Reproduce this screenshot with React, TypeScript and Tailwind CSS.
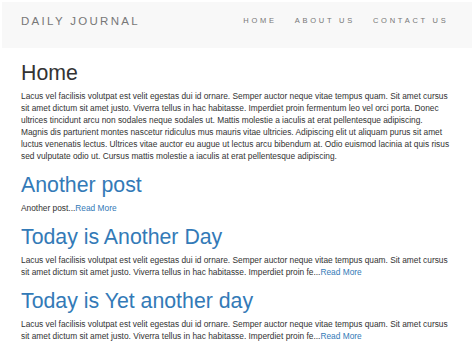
const LOREM_FULL =
  'Lacus vel facilisis volutpat est velit egestas dui id ornare. Semper auctor neque vitae tempus quam. Sit amet cursus sit amet dictum sit amet justo. Viverra tellus in hac habitasse. Imperdiet proin fermentum leo vel orci porta. Donec ultrices tincidunt arcu non sodales neque sodales ut. Mattis molestie a iaculis at erat pellentesque adipiscing. Magnis dis parturient montes nascetur ridiculus mus mauris vitae ultricies. Adipiscing elit ut aliquam purus sit amet luctus venenatis lectus. Ultrices vitae auctor eu augue ut lectus arcu bibendum at. Odio euismod lacinia at quis risus sed vulputate odio ut. Cursus mattis molestie a iaculis at erat pellentesque adipiscing.'

const LOREM_SHORT =
  'Lacus vel facilisis volutpat est velit egestas dui id ornare. Semper auctor neque vitae tempus quam. Sit amet cursus sit amet dictum sit amet justo. Viverra tellus in hac habitasse. Imperdiet proin fe'

const POSTS = [
  { title: 'Another post', excerpt: 'Another post' },
  { title: 'Today is Another Day', excerpt: LOREM_SHORT },
  { title: 'Today is Yet another day', excerpt: LOREM_SHORT },
]

const NAV = ['HOME', 'ABOUT US', 'CONTACT US']

export default function App() {
  return (
    <div className="min-h-[355px] bg-white pt-[2px] font-['Liberation_Sans',Arial,sans-serif] text-[#333]">
      {/* Navbar */}
      <nav className="mx-[2px] flex h-[46px] items-start justify-between bg-[#f8f8f8] pl-[19px] pr-[23.5px]">
        <a className="mt-[12px] text-[11.5px] leading-[14px] tracking-[2.3px] text-[#777]">DAILY JOURNAL</a>
        <ul className="mt-[14px] flex gap-[18px]">
          {NAV.map(n => (
            <li key={n} className="text-[7.5px] leading-[10px] tracking-[2.75px] text-[#777]">
              {n}
            </li>
          ))}
        </ul>
      </nav>

      <main className="pl-[21px] pr-[24px] pt-[14px]">
        <h1 className="mb-[5px] text-[21.3px] leading-[23px] font-normal">Home</h1>
        <p className="mb-[6px] text-[8.35px] leading-[12px]">{LOREM_FULL}</p>

        {POSTS.map(p => (
          <div key={p.title}>
            <h2 className="mt-[12px] mb-[5px] text-[21.3px] leading-[23px] font-normal text-[#337ab7]">
              {p.title}
            </h2>
            <p className="mb-[6px] text-[8.35px] leading-[12px]">
              {p.excerpt}...<a className="text-[#337ab7]">Read More</a>
            </p>
          </div>
        ))}
      </main>
    </div>
  )
}
